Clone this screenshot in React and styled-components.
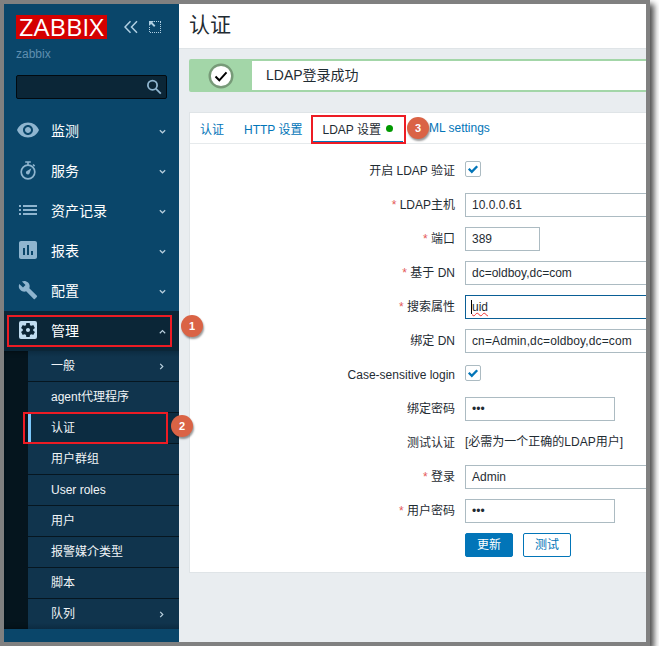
import React from "react";
import styled, { createGlobalStyle, css } from "styled-components";
import {
  MdVisibility,
  MdList,
  MdAssessment,
  MdBuild,
  MdSettingsApplications,
} from "react-icons/md";

const GlobalStyle = createGlobalStyle`
  * {
    box-sizing: border-box;
  }
  body {
    margin: 0;
    background: #fff;
    font-family: "Liberation Sans", "Noto Sans CJK SC", sans-serif;
    font-size: 12px;
    color: #1f2c33;
    overflow: hidden;
  }
`;

const Frame = styled.div`
  position: relative;
  display: flex;
  width: 650px;
  height: 646px;
  border: 4px solid #808080;
  box-shadow: 4px 4px 6px rgba(0, 0, 0, 0.7);
`;

const Sidebar = styled.aside`
  flex: none;
  width: 175px;
  background: #0a466a;
  color: #fff;
`;

const SidebarHead = styled.div`
  display: flex;
  align-items: center;
  height: 24px;
  margin: 11px 0 0 12px;
`;

const Logo = styled.svg`
  flex: none;
  width: 91px;
  height: 24px;
  margin-right: 17px;
  background: #d40000;
`;

const HeadIcon = styled.svg`
  flex: none;
  width: 14px;
  height: 14px;
  margin-right: 10px;
  fill: none;
  stroke: #b0cfe2;
`;

const ServerName = styled.div`
  height: 36px;
  padding: 8px 12px 0;
  line-height: 14px;
  color: #5f8fb0;
`;

const Search = styled.div`
  display: flex;
  align-items: center;
  justify-content: flex-end;
  height: 24px;
  margin: 0 12px 12px;
  padding-right: 4px;
  border: 1px solid #020a10;
  border-radius: 2px;
  background: #0b2637;
`;

const MenuItem = styled.div`
  display: flex;
  align-items: center;
  height: 40px;
  padding: 0 12px;
  font-size: 14px;
  color: #fff;

  ${(p) =>
    p.$open &&
    css`
      background: #0b2637;
    `}
`;

const ItemIcon = styled.span`
  flex: none;
  display: flex;
  align-items: center;
  justify-content: center;
  width: 24px;
  height: 24px;
  margin: 0 11px 2px 0;
  color: ${(p) => (p.$open ? "#bfdcf0" : "#8fb5cf")};

  svg {
    width: ${(p) => p.$size || 24}px;
    height: ${(p) => p.$size || 24}px;
  }
`;

const ItemText = styled.span`
  flex: 1;
  line-height: 20px;
`;

const Arrow = styled.svg`
  width: 7px;
  height: 7px;
  margin-right: ${(p) => (p.$sub ? 2 : 1)}px;
  fill: none;
  stroke: #b9cfdd;
  stroke-width: 1.2;
`;

const Submenu = styled.div`
  height: 278px;
  padding-left: 24px;
  background: #05151e;
  box-shadow: inset 0 5px 5px -4px rgba(0, 0, 0, 0.45), inset 0 -5px 5px -4px rgba(0, 0, 0, 0.45);
`;

const SubItem = styled.div`
  display: flex;
  align-items: center;
  height: 31px;
  padding: 0 12px 0 23px;
  border-bottom: 1px solid #061620;
  background: #10344d;
  color: #f0f4f7;

  &:first-child {
    background: linear-gradient(#0c2b41, #10344d 6px);
  }
  &:last-child {
    height: 30px;
    border-bottom: none;
    background: linear-gradient(#10344d 24px, #0c2b41);
  }

  ${(p) =>
    p.$selected &&
    css`
      padding-left: 20px;
      border-left: 3px solid #7cc8fb;
      background: #0c2c41;
    `}
`;

const Main = styled.main`
  flex: 1;
  min-width: 0;
  overflow: hidden;
  background: #e9edf0;
`;

const Title = styled.h1`
  height: 45px;
  margin: 0;
  padding: 6px 10px 0;
  border-bottom: 1px solid #dfe4e7;
  background: #fff;
  font-size: 21px;
  font-weight: 400;
  line-height: 30px;
`;

const Message = styled.div`
  display: flex;
  width: 560px;
  height: 33px;
  margin: 10px 10px 20px;
  border: 2px solid #a3d6a8;
  border-radius: 2px;
  background: #fff;
`;

const MessageIcon = styled.div`
  flex: none;
  display: flex;
  align-items: center;
  justify-content: center;
  width: 61px;
  padding-right: 2px;
  background: #a3d6a8;
`;

const MessageText = styled.div`
  padding-left: 14px;
  font-size: 14px;
  line-height: 28px;
`;

const Card = styled.section`
  width: 560px;
  height: 461px;
  margin-left: 10px;
  border: 1px solid #dfe4e7;
  background: #fff;
`;

const Tabs = styled.nav`
  display: flex;
  height: 31px;
  border-bottom: 1px solid #e6eaec;
`;

const Tab = styled.a`
  display: flex;
  align-items: center;
  padding: 0 10px;
  color: #0275b8;

  ${(p) =>
    p.$active &&
    css`
      height: 30px;
      margin-right: 16px;
      padding-top: 2px;
      border-bottom: 2px solid #0275b8;
      color: #1f2c33;
    `}
`;

const Dot = styled.i`
  width: 7px;
  height: 7px;
  margin-left: 5px;
  border-radius: 50%;
  background: #009900;
`;

const Form = styled.div`
  display: grid;
  grid-template-columns: 265px 1fr;
  grid-auto-rows: 24px;
  gap: 10px;
  padding-top: 15px;
`;

const Label = styled.label`
  text-align: right;
  line-height: 24px;

  ${(p) =>
    p.$required &&
    css`
      &::before {
        content: "* ";
        color: #e45959;
      }
    `}
`;

const Field = styled.div`
  width: ${(p) => p.$width || 280}px;
  height: 24px;
  padding-left: 6px;
  border: 1px solid ${(p) => (p.$focus ? "#0a5f96" : "#acbbc2")};
  background: #fff;
  letter-spacing: ${(p) => (p.$spaced ? 0.12 : 0)}px;
  line-height: 22px;
`;

const Misspelled = styled.span`
  display: inline-block;
  height: 14px;
  margin-left: -1px;
  border-left: 1px solid #000;
  line-height: 14px;
  text-decoration: underline wavy #e33 1px;
  text-underline-offset: 1px;
`;

const Checkbox = styled.span`
  display: flex;
  width: 16px;
  height: 16px;
  margin-top: 2px;
  border: 1px solid #acbbc2;
  border-radius: 2px;
`;

const Hint = styled.span`
  line-height: 23px;
`;

const Buttons = styled.div`
  display: flex;
  gap: 10px;
`;

const Button = styled.button`
  width: 48px;
  height: 24px;
  padding: 1px 0 0;
  border: 1px solid #0275b8;
  border-radius: 2px;
  background: ${(p) => (p.$primary ? "#0275b8" : "#fff")};
  color: ${(p) => (p.$primary ? "#fff" : "#0275b8")};
  font: inherit;
  line-height: 21px;
`;

// red outlines and numbered markers laid over the screen
const Highlight = styled.div`
  position: absolute;
  left: ${(p) => p.$x}px;
  top: ${(p) => p.$y}px;
  width: ${(p) => p.$w}px;
  height: ${(p) => p.$h}px;
  border: 2px solid #ed1c24;
`;

const Step = styled.div`
  position: absolute;
  left: ${(p) => p.$x}px;
  top: ${(p) => p.$y}px;
  width: 22px;
  height: 22px;
  border-radius: 50%;
  background: #da6345;
  box-shadow: 1px 2px 2px rgba(0, 0, 0, 0.4);
  color: #fff;
  font-size: 11px;
  font-weight: bold;
  line-height: 22px;
  text-align: center;
`;

const Stopwatch = () => (
  <svg viewBox="0 0 24 24" fill="none" stroke="currentColor">
    <circle cx="12" cy="14" r="6.8" strokeWidth="1.7" />
    <path d="M9.2 4h5.6M12 4v3M17 6.5l1.6 1.6" strokeWidth="1.6" />
    <path d="M15.4 10.2l-1.8 5a1.9 1.9 0 1 1-2.7-2.3z" fill="currentColor" stroke="none" />
  </svg>
);

const Chevron = ({ dir, sub }) => {
  const paths = { down: "M.8 2.2l2.7 2.6 2.7-2.6", up: "M.8 5.2l2.7-2.6 2.7 2.6", right: "M2.2 .8l2.6 2.7-2.6 2.7" };
  return (
    <Arrow viewBox="0 0 7 7" $sub={sub}>
      <path d={paths[dir]} />
    </Arrow>
  );
};

const Checked = () => (
  <Checkbox>
    <svg width="14" height="14" fill="none" stroke="#0275b8" strokeWidth="2.3">
      <path d="M2.8 6.8l3 3 5.4-5.6" />
    </svg>
  </Checkbox>
);

const menu = [
  { text: "监测", icon: <MdVisibility /> },
  { text: "服务", icon: <Stopwatch /> },
  { text: "资产记录", icon: <MdList /> },
  { text: "报表", icon: <MdAssessment /> },
  { text: "配置", icon: <MdBuild />, size: 20 },
  { text: "管理", icon: <MdSettingsApplications />, open: true },
];

const submenu = [
  { text: "一般", more: true },
  { text: "agent代理程序" },
  { text: "认证", selected: true },
  { text: "用户群组" },
  { text: "User roles" },
  { text: "用户" },
  { text: "报警媒介类型" },
  { text: "脚本" },
  { text: "队列", more: true },
];

export default function App() {
  return (
    <>
      <GlobalStyle />
      <Frame>
        <Sidebar>
          <SidebarHead>
            <Logo viewBox="0 0 91 24">
              <text x="3" y="20.6" textLength="85" lengthAdjust="spacingAndGlyphs" fill="#fff" fontFamily="Open Sans" fontSize="24">
                ZABBIX
              </text>
            </Logo>
            <HeadIcon viewBox="0 0 14 14" strokeWidth="1.5">
              <path d="M6.5 1.2L1 7l5.5 5.8M13 1.2L7.5 7l5.5 5.8" />
            </HeadIcon>
            <HeadIcon viewBox="0 0 14 14">
              <path d="M6 1.5h7M12.5 2v11M1.5 7v6M2 12.5h10" strokeDasharray="1 1" />
              <path d="M1 1h5L4.4 2.6l3 3-1.3 1.3-3-3L1 6z" fill="#b0cfe2" stroke="none" />
            </HeadIcon>
          </SidebarHead>
          <ServerName>zabbix</ServerName>
          <Search>
            <svg width="16" height="16" fill="none" stroke="#8fb5cf" strokeWidth="1.8">
              <circle cx="6.5" cy="6.2" r="4.6" />
              <path d="M9.8 9.6l5 5" />
            </svg>
          </Search>
          {menu.map((m) => (
            <MenuItem key={m.text} $open={m.open}>
              <ItemIcon $open={m.open} $size={m.size}>
                {m.icon}
              </ItemIcon>
              <ItemText>{m.text}</ItemText>
              <Chevron dir={m.open ? "up" : "down"} />
            </MenuItem>
          ))}
          <Submenu>
            {submenu.map((s) => (
              <SubItem key={s.text} $selected={s.selected}>
                <ItemText>{s.text}</ItemText>
                {s.more && <Chevron dir="right" sub />}
              </SubItem>
            ))}
          </Submenu>
        </Sidebar>
        <Main>
          <Title>认证</Title>
          <Message>
            <MessageIcon>
              <svg width="26" height="26" fill="none">
                <circle cx="13" cy="13" r="11.3" fill="#fff" stroke="#779a78" strokeWidth="2.4" />
                <path d="M7.5 13.5l3.8 3.8 7.2-8" stroke="#000" strokeWidth="2" />
              </svg>
            </MessageIcon>
            <MessageText>LDAP登录成功</MessageText>
          </Message>
          <Card>
            <Tabs>
              <Tab>认证</Tab>
              <Tab>HTTP 设置</Tab>
              <Tab $active>
                LDAP 设置
                <Dot />
              </Tab>
              <Tab>ML settings</Tab>
            </Tabs>
            <Form>
              <Label>开启 LDAP 验证</Label>
              <Checked />
              <Label $required>LDAP主机</Label>
              <Field>10.0.0.61</Field>
              <Label $required>端口</Label>
              <Field $width={75}>389</Field>
              <Label $required>基于 DN</Label>
              <Field>dc=oldboy,dc=com</Field>
              <Label $required>搜索属性</Label>
              <Field $focus>
                <Misspelled>uid</Misspelled>
              </Field>
              <Label>绑定 DN</Label>
              <Field $spaced>cn=Admin,dc=oldboy,dc=com</Field>
              <Label>Case-sensitive login</Label>
              <Checked />
              <Label>绑定密码</Label>
              <Field $width={150}>•••</Field>
              <Label>测试认证</Label>
              <Hint>[必需为一个正确的LDAP用户]</Hint>
              <Label $required>登录</Label>
              <Field>Admin</Field>
              <Label $required>用户密码</Label>
              <Field $width={150}>•••</Field>
              <span />
              <Buttons>
                <Button $primary>更新</Button>
                <Button>测试</Button>
              </Buttons>
            </Form>
          </Card>
        </Main>
        <Highlight $x={3} $y={311} $w={165} $h={32} />
        <Highlight $x={19} $y={408} $w={145} $h={32} />
        <Highlight $x={307} $y={111} $w={95} $h={29} />
        <Step $x={177} $y={311}>1</Step>
        <Step $x={167} $y={411}>2</Step>
        <Step $x={403} $y={113}>3</Step>
      </Frame>
    </>
  );
}
